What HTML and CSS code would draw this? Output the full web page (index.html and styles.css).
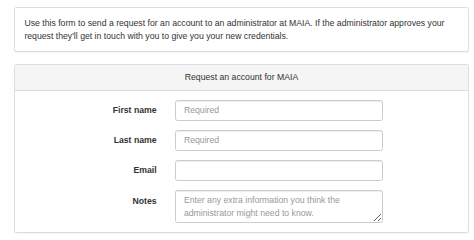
FILE: index.html
```html
<!DOCTYPE html>
<html>
<head>
<meta charset="utf-8">
<link rel="stylesheet" href="styles.css">
</head>
<body>
<div class="page">
  <div class="panel">
    <div class="panel-body">
      Use this form to send a request for an account to an administrator at MAIA. If the administrator approves your request they'll get in touch with you to give you your new credentials.
    </div>
  </div>
  <div class="panel">
    <div class="panel-heading">Request an account for MAIA</div>
    <div class="panel-body">
      <form class="form">
        <div class="form-group">
          <label class="control-label">First name</label>
          <div class="control-col"><input class="form-control" type="text" placeholder="Required"></div>
        </div>
        <div class="form-group">
          <label class="control-label">Last name</label>
          <div class="control-col"><input class="form-control" type="text" placeholder="Required"></div>
        </div>
        <div class="form-group">
          <label class="control-label">Email</label>
          <div class="control-col"><input class="form-control" type="email"></div>
        </div>
        <div class="form-group">
          <label class="control-label">Notes</label>
          <div class="control-col"><textarea class="form-control notes" placeholder="Enter any extra information you think the administrator might need to know."></textarea></div>
        </div>
      </form>
    </div>
  </div>
</div>
</body>
</html>
```

FILE: styles.css
```css
html, body {
  margin: 0;
  padding: 0;
  background: #fff;
}
body {
  font-family: "Liberation Sans", Arial, sans-serif;
  font-size: 8.7px;
  line-height: 12.5px;
  color: #333;
}
.page {
  padding: 7px 5px 0 14px;
}
.panel {
  border: 1px solid #ddd;
  border-radius: 2.5px;
  box-shadow: 0 1px 1px rgba(0,0,0,.05);
  margin-bottom: 12px;
  background: #fff;
}
.panel-body {
  padding: 9px 9.4px;
}
.panel-heading {
  background: #f5f5f5;
  border-bottom: 1px solid #ddd;
  padding: 6px 9.4px;
  height: 12.5px;
  text-align: center;
  color: #333;
  border-radius: 2.5px 2.5px 0 0;
}
.form {
  display: grid;
  row-gap: 9px;
  margin: 0 -9.4px;
}
.form-group {
  display: grid;
  grid-template-columns: 4fr 6fr 2fr;
}
.control-label {
  font-weight: bold;
  text-align: right;
  padding: 4.4px 9.4px 0;
}
.control-col {
  padding: 0 9.4px;
}
.form-control {
  display: block;
  box-sizing: border-box;
  width: 100%;
  height: 21.25px;
  margin: 0;
  padding: 3.75px 7.5px;
  font-family: "Liberation Sans", Arial, sans-serif;
  font-size: 8.7px;
  line-height: 12.5px;
  color: #555;
  background: #fff;
  border: 1px solid #ccc;
  border-radius: 2.5px;
  box-shadow: inset 0 1px 1px rgba(0,0,0,.075);
  outline: none;
}
.form-control::placeholder {
  color: #999;
  opacity: 1;
}
.notes {
  height: 33px;
  padding-top: 3px;
  resize: vertical;
}
```
